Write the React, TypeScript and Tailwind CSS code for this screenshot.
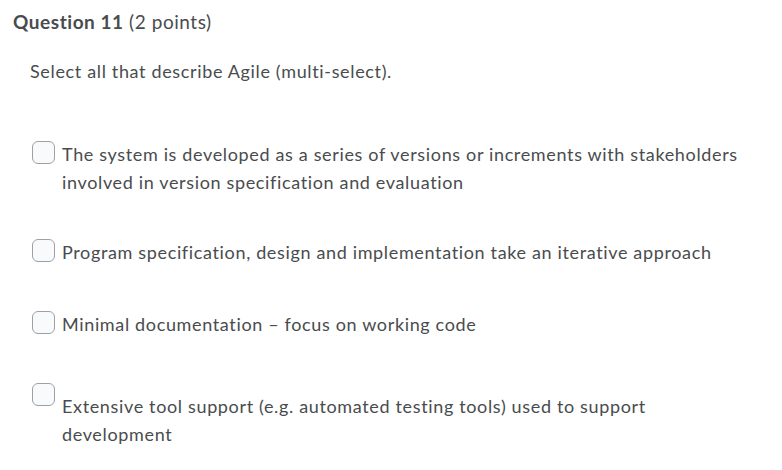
import React from 'react'

const options = [
  {
    id: 'a',
    text: 'The system is developed as a series of versions or increments with stakeholders involved in version specification and evaluation',
  },
  {
    id: 'b',
    text: 'Program specification, design and implementation take an iterative approach',
  },
  {
    id: 'c',
    text: 'Minimal documentation \u2013 focus on working code',
  },
]

function Box() {
  return (
    <span className="mt-[1px] block h-[23px] w-[23px] shrink-0 rounded-[6px] border border-[#9ea1a4] bg-[#f9fafc]" />
  )
}

export default function App() {
  return (
    <div
      className="h-[470px] w-[782px] bg-white text-[#494c4e] tracking-[0.65px]"
      style={{ fontFamily: 'Lato, "Open Sans", sans-serif' }}
    >
      <div className="pl-[13px] pt-[9px] text-[19px] leading-[26px] tracking-[0.55px]">
        <span className="font-bold">Question 11</span> (2 points)
      </div>

      <div className="mt-[22px] pl-[30px] text-[18px] leading-[28px]">
        Select all that describe Agile (multi-select).
      </div>

      {/* options */}
      <div className="mt-[55px] pl-[32px] text-[18px] leading-[28px]">
        {options.map((o, i) => (
          <div key={o.id} className={'flex items-start gap-[7px] ' + (i == 0 ? '' : i == 1 ? 'mt-[42px]' : 'mt-[44px]')}>
            <Box />
            <span className="w-[685px]">{o.text}</span>
          </div>
        ))}

        <div className="mt-[44px] flex items-start gap-[7px]">
          <Box />
          <span className="w-[685px] pt-[10px]">
            Extensive tool support (e.g. automated testing tools) used to support development
          </span>
        </div>
      </div>
    </div>
  )
}
